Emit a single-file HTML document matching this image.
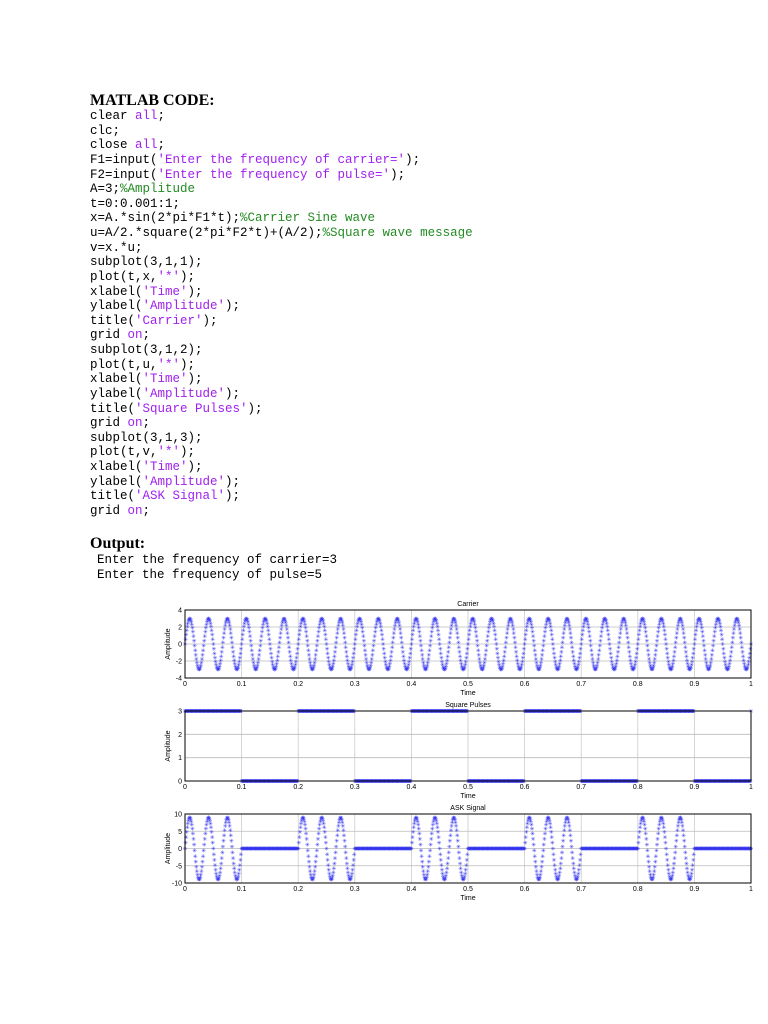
<!DOCTYPE html>
<html><head><meta charset="utf-8"><style>
body{margin:0;background:#fff;width:768px;height:1024px;position:relative;overflow:hidden}
.h{position:absolute;left:90px;font:bold 16px "Liberation Serif",serif;color:#000}
pre{position:absolute;margin:0;left:90px;font:12.5px/14.63px "Liberation Mono",monospace;color:#000}
.p{color:#a020f0}.g{color:#228b22}
svg{position:absolute;left:0;top:0}
</style></head><body>
<div class="h" style="top:92px">MATLAB CODE:</div>
<pre style="top:109px">clear <span class="p">all</span>;
clc;
close <span class="p">all</span>;
F1=input(<span class="p">'Enter the frequency of carrier='</span>);
F2=input(<span class="p">'Enter the frequency of pulse='</span>);
A=3;<span class="g">%Amplitude</span>
t=0:0.001:1;
x=A.*sin(2*pi*F1*t);<span class="g">%Carrier Sine wave</span>
u=A/2.*square(2*pi*F2*t)+(A/2);<span class="g">%Square wave message</span>
v=x.*u;
subplot(3,1,1);
plot(t,x,<span class="p">'*'</span>);
xlabel(<span class="p">'Time'</span>);
ylabel(<span class="p">'Amplitude'</span>);
title(<span class="p">'Carrier'</span>);
grid <span class="p">on</span>;
subplot(3,1,2);
plot(t,u,<span class="p">'*'</span>);
xlabel(<span class="p">'Time'</span>);
ylabel(<span class="p">'Amplitude'</span>);
title(<span class="p">'Square Pulses'</span>);
grid <span class="p">on</span>;
subplot(3,1,3);
plot(t,v,<span class="p">'*'</span>);
xlabel(<span class="p">'Time'</span>);
ylabel(<span class="p">'Amplitude'</span>);
title(<span class="p">'ASK Signal'</span>);
grid <span class="p">on</span>;</pre>
<div class="h" style="top:535px">Output:</div>
<pre style="top:553px;left:97px">Enter the frequency of carrier=3
Enter the frequency of pulse=5</pre>
<svg id="s" width="768" height="1024" xmlns="http://www.w3.org/2000/svg" font-family="Liberation Sans, sans-serif" font-size="7"></svg>
<script>
var s=document.getElementById('s'),h='';
var L=185,R=751;
function X(t){return L+t*(R-L)}
function sq(t){var p=(t*5+1e-9)%1;return p<0.5?3:0}
function plot(top,bot,ymin,ymax,f,yt,title){
 var Y=function(v){return bot-(v-ymin)/(ymax-ymin)*(bot-top)};
 for(var i=1;i<10;i++)h+='<line x1="'+X(i/10)+'" y1="'+top+'" x2="'+X(i/10)+'" y2="'+bot+'" stroke="#ccc" stroke-width="0.8"/>';
 yt.forEach(function(v){h+='<line x1="'+L+'" y1="'+Y(v)+'" x2="'+R+'" y2="'+Y(v)+'" stroke="#bbb" stroke-width="0.8"/>';
  h+='<text x="'+(L-3)+'" y="'+(Y(v)+2.5)+'" text-anchor="end">'+v+'</text>'});
 for(var i=0;i<=10;i++)h+='<text x="'+X(i/10)+'" y="'+(bot+8)+'" text-anchor="middle">'+(i==0?0:i==10?1:(i/10).toFixed(1))+'</text>';
 var m='';
 for(var k=0;k<=1000;k+=1){var t=k/1000,x=X(t),y=Y(f(t));
  m+='M'+(x-2).toFixed(1)+' '+y.toFixed(1)+'h4M'+x.toFixed(1)+' '+(y-2).toFixed(1)+'v4M'+(x-1.5).toFixed(1)+' '+(y-1.5).toFixed(1)+'l3 3M'+(x-1.5).toFixed(1)+' '+(y+1.5).toFixed(1)+'l3 -3';}
 h+='<path d="'+m+'" stroke="#3333ee" stroke-width="0.5" fill="none" opacity="0.75"/>';
 h+='<rect x="'+L+'" y="'+top+'" width="'+(R-L)+'" height="'+(bot-top)+'" fill="none" stroke="#000" stroke-width="1"/>';
 h+='<text x="'+(L+R)/2+'" y="'+(top-4)+'" text-anchor="middle">'+title+'</text>';
 h+='<text x="'+(L+R)/2+'" y="'+(bot+17)+'" text-anchor="middle">Time</text>';
 h+='<text transform="translate(170,'+(top+bot)/2+') rotate(-90)" text-anchor="middle">Amplitude</text>';
}
plot(610,678,-4,4,function(t){return 3*Math.sin(2*Math.PI*30*t)},[4,2,0,-2,-4],'Carrier');
plot(711,781,0,3,sq,[3,2,1,0],'Square Pulses');
plot(814,883,-10,10,function(t){return 3*Math.sin(2*Math.PI*30*t)*sq(t)},[10,5,0,-5,-10],'ASK Signal');
s.innerHTML=h;
</script>
</body></html>
